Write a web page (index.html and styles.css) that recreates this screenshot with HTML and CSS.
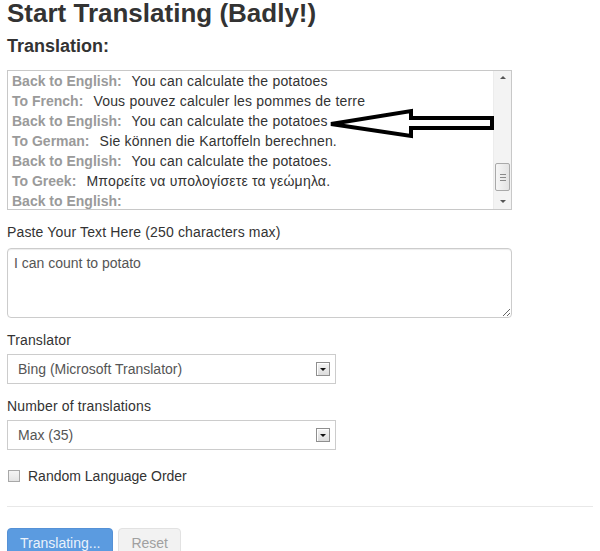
FILE: index.html
```html
<!DOCTYPE html>
<html>
<head>
<meta charset="utf-8">
<link rel="stylesheet" href="styles.css">
</head>
<body>
<div class="page">
  <h1 class="title">Start Translating (Badly!)</h1>
  <h2 class="subtitle">Translation:</h2>
  <div class="result">
    <div class="result-text">
      <div class="line"><span class="lang">Back to English:</span> You can calculate the potatoes</div>
      <div class="line"><span class="lang">To French:</span> Vous pouvez calculer les pommes de terre</div>
      <div class="line"><span class="lang">Back to English:</span> You can calculate the potatoes</div>
      <div class="line"><span class="lang">To German:</span> Sie können die Kartoffeln berechnen.</div>
      <div class="line"><span class="lang">Back to English:</span> You can calculate the potatoes.</div>
      <div class="line"><span class="lang">To Greek:</span> Μπορείτε να υπολογίσετε τα γεώμηλα.</div>
      <div class="line"><span class="lang">Back to English:</span></div>
    </div>
    <div class="scrollbar">
      <span class="sb-up"></span>
      <span class="sb-track"></span>
      <span class="sb-thumb"><i></i><i></i><i></i></span>
      <span class="sb-down"></span>
    </div>
  </div>

  <label class="field-label paste-label">Paste Your Text Here (250 characters max)</label>
  <textarea class="input-area" rows="3">I can count to potato</textarea>

  <label class="field-label">Translator</label>
  <div class="select"><span class="select-value">Bing (Microsoft Translator)</span><span class="select-btn"></span></div>

  <label class="field-label">Number of translations</label>
  <div class="select"><span class="select-value">Max (35)</span><span class="select-btn"></span></div>

  <label class="check"><span class="check-box"></span>Random Language Order</label>

  <hr class="divider">

  <div class="actions">
    <span class="btn btn-primary">Translating...</span>
    <span class="btn btn-default">Reset</span>
  </div>
</div>
<svg class="arrow" width="600" height="551" viewBox="0 0 600 551">
  <polygon points="331,124 411,111 411,118 492,118 492,128 411,128 411,136" fill="#fff" stroke="#000" stroke-width="4" stroke-linejoin="miter"/>
</svg>
</body>
</html>
```

FILE: styles.css
```css
html, body {
  margin: 0;
  padding: 0;
  background: #fff;
}
body {
  position: relative;
  width: 600px;
  height: 551px;
  overflow: hidden;
  font-family: "Liberation Sans", Arial, sans-serif;
  font-size: 14px;
  line-height: 20px;
  color: #333;
}
.page {
  padding: 0 7px;
}
.title {
  margin: -1px 0 0;
  font-size: 26px;
  line-height: 28px;
  font-weight: 700;
  color: #333;
}
.subtitle {
  margin: 9px 0 14px;
  font-size: 18px;
  line-height: 20px;
  font-weight: 700;
  color: #333;
}
.result {
  display: flex;
  width: 503px;
  height: 138px;
  border: 1px solid #c8c8c8;
  overflow: hidden;
}
.result-text {
  flex: 1;
  padding: 0 4px;
  overflow: hidden;
  white-space: nowrap;
  letter-spacing: 0.2px;
}
.lang {
  font-weight: 700;
  color: #9a9a9a;
  margin-right: 6px;
  letter-spacing: 0;
}
.scrollbar {
  position: relative;
  width: 17px;
  background: #f3f3f3;
  border-left: 1px solid #ececec;
  display: flex;
  flex-direction: column;
  align-items: center;
}
.sb-up, .sb-down {
  width: 0;
  height: 0;
  border-left: 3px solid transparent;
  border-right: 3px solid transparent;
}
.sb-up {
  margin-top: 5px;
  border-bottom: 3px solid #555;
}
.sb-track {
  flex: 1;
}
.sb-down {
  margin-bottom: 6px;
  border-top: 3px solid #555;
}
.sb-thumb {
  position: absolute;
  left: 1px;
  top: 92px;
  width: 13px;
  height: 26px;
  border: 1px solid #a9a9a9;
  border-radius: 2px;
  background: linear-gradient(to right, #f6f6f6, #e3e3e3);
  display: flex;
  flex-direction: column;
  align-items: center;
  justify-content: center;
  gap: 2px;
}
.sb-thumb i {
  display: block;
  width: 6px;
  height: 1px;
  background: #8a8a8a;
}
.field-label {
  display: block;
  margin: 12px 0 9px;
  color: #333;
  letter-spacing: 0.15px;
}
.paste-label {
  margin-bottom: 6px;
}
.input-area {
  display: block;
  box-sizing: border-box;
  width: 505px;
  height: 70px;
  margin: 0;
  padding: 4px 6px;
  border: 1px solid #ccc;
  border-radius: 4px;
  box-shadow: inset 0 1px 1px rgba(0,0,0,0.075);
  font-family: "Liberation Sans", Arial, sans-serif;
  font-size: 14px;
  line-height: 20px;
  color: #555;
  resize: vertical;
  outline: none;
}
.select {
  box-sizing: border-box;
  display: flex;
  align-items: center;
  width: 329px;
  height: 30px;
  border: 1px solid #ccc;
  background: #fff;
  padding: 0 5px 0 10px;
  margin-top: -5px;
  color: #555;
}
.select-value {
  flex: 1;
}
.select-btn {
  position: relative;
  box-sizing: border-box;
  width: 14px;
  height: 14px;
  border: 1px solid #8f8f8f;
  background: linear-gradient(#f4f4f4, #dcdcdc);
  box-shadow: inset 1px 1px 0 #fff;
}
.select-btn::after {
  content: "";
  position: absolute;
  left: 3px;
  top: 5px;
  width: 0;
  height: 0;
  border-left: 3px solid transparent;
  border-right: 3px solid transparent;
  border-top: 3px solid #111;
}
.check {
  display: flex;
  align-items: center;
  margin-top: 16px;
  color: #333;
}
.check-box {
  box-sizing: border-box;
  width: 12px;
  height: 12px;
  margin: 0 8px 0 1px;
  border: 1px solid #a8a8a8;
  background: linear-gradient(#f4f4f4, #e4e4e4);
}
.divider {
  margin: 20px 0 20px;
  border: 0;
  border-top: 1px solid #e8e8e8;
  border-bottom: 1px solid #fff;
}
.actions {
  display: flex;
  gap: 5px;
}
.btn {
  display: inline-block;
  padding: 4px 12px;
  border-radius: 4px;
  font-size: 14px;
  line-height: 20px;
}
.btn-primary {
  background: #5b9be0;
  border: 1px solid #5591d6;
  color: #eaf2fb;
}
.btn-default {
  background: #f2f2f2;
  border: 1px solid #e2e2e2;
  color: #a0a0a0;
}
.arrow {
  position: absolute;
  left: 0;
  top: 0;
  pointer-events: none;
}
```
